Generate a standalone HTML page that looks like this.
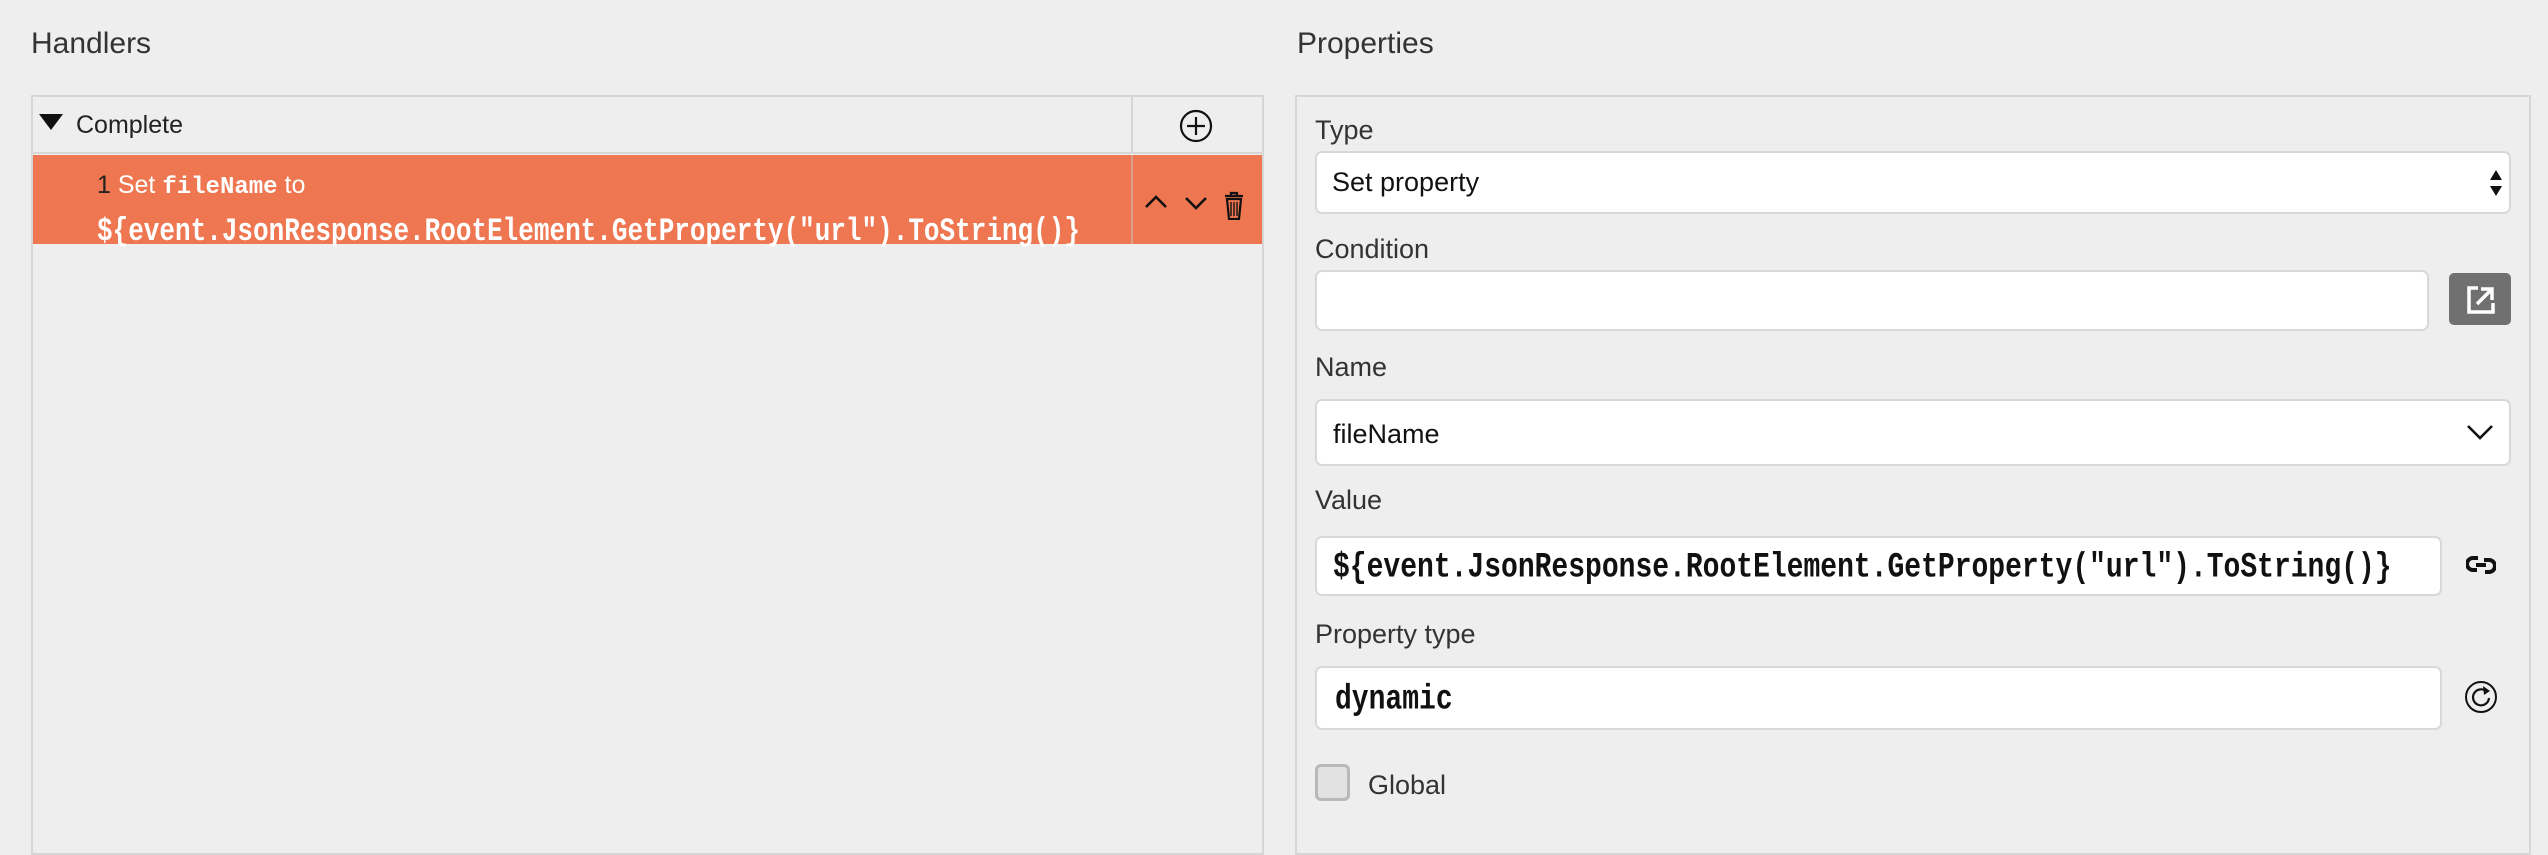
<!DOCTYPE html>
<html><head><meta charset="utf-8"><style>
*{box-sizing:border-box;margin:0;padding:0}
body{width:2548px;height:840px;background:#eeeeee;font-family:"Liberation Sans",sans-serif;color:#222;position:relative;overflow:hidden}
.a{position:absolute}
.h{font-size:30px;color:#333}
.lbl{font-size:27px;color:#333}
.box{background:#fff;border:2px solid #d8d8d8;border-radius:7px}
.mono{font-family:"Liberation Mono",monospace;font-weight:bold}
.tall{transform:scaleY(1.25);transform-origin:0 50%}
</style></head><body>
<div class="a h" style="left:31px;top:27px">Handlers</div>
<div class="a h" style="left:1297px;top:27px">Properties</div>

<div class="a" style="left:31px;top:95px;width:1233px;height:760px;border:2px solid #d6d6d6;background:#eeeeee"></div>
<div class="a" style="left:1131px;top:96px;width:2px;height:58px;background:#d6d6d6"></div>
<div class="a" style="left:33px;top:152px;width:1229px;height:2px;background:#d6d6d6"></div>
<svg class="a" style="left:38px;top:112px" width="26" height="20"><polygon points="1,2 25,2 13,18" fill="#111"/></svg>
<div class="a" style="left:76px;top:111px;font-size:25px;color:#222">Complete</div>
<svg class="a" style="left:1178px;top:108px" width="36" height="36"><circle cx="18" cy="18" r="15" fill="none" stroke="#111" stroke-width="2.2"/><path d="M18 9V27M9 18H27" stroke="#111" stroke-width="2.2"/></svg>

<div class="a" style="left:33px;top:155px;width:1229px;height:89px;background:#ee7650"></div>
<div class="a" style="left:1131px;top:155px;width:2px;height:89px;background:#d9a08a"></div>
<div class="a" style="left:97px;top:171px;font-size:25px;color:#fff;white-space:nowrap"><span style="color:#222">1</span> Set <span class="mono" style="font-size:24px">fileName</span> to</div>
<div class="a mono tall" style="left:97px;top:216px;font-size:26px;color:#fff;white-space:nowrap">${event.JsonResponse.RootElement.GetProperty("url").ToString()}</div>
<svg class="a" style="left:1143px;top:190px" width="120" height="30"><path d="M3 17L13 7L23 17" fill="none" stroke="#111" stroke-width="2.6"/><path d="M43 8L53 18L63 8" fill="none" stroke="#111" stroke-width="2.6"/><path d="M82 6H100M88 6V3H94V6M84 9L86 29H96L98 9Z" fill="none" stroke="#111" stroke-width="2.2"/><path d="M88 12V26M91 12V26M94 12V26" stroke="#111" stroke-width="1.4"/></svg>

<div class="a" style="left:1295px;top:95px;width:1236px;height:760px;border:2px solid #d6d6d6"></div>

<div class="a lbl" style="left:1315px;top:115px">Type</div>
<div class="a box" style="left:1315px;top:151px;width:1196px;height:63px"></div>
<div class="a" style="left:1332px;top:167px;font-size:27px;color:#111">Set property</div>
<svg class="a" style="left:2488px;top:169px" width="16" height="28"><polygon points="8,1 14,11 2,11" fill="#111"/><polygon points="8,27 14,17 2,17" fill="#111"/></svg>

<div class="a lbl" style="left:1315px;top:234px">Condition</div>
<div class="a box" style="left:1315px;top:270px;width:1114px;height:61px"></div>
<div class="a" style="left:2449px;top:273px;width:62px;height:52px;background:#707070;border-radius:5px"></div>
<svg class="a" style="left:2465px;top:284px" width="32" height="32"><path d="M13 4H4V28H28V19" fill="none" stroke="#fff" stroke-width="3.5"/><path d="M12 20L26 6M16 5H27V16" fill="none" stroke="#fff" stroke-width="3.5"/></svg>

<div class="a lbl" style="left:1315px;top:352px">Name</div>
<div class="a box" style="left:1315px;top:399px;width:1196px;height:67px"></div>
<div class="a" style="left:1333px;top:419px;font-size:27px;color:#111">fileName</div>
<svg class="a" style="left:2466px;top:423px" width="28" height="18"><path d="M2 3L14 15L26 3" fill="none" stroke="#111" stroke-width="2.6"/></svg>

<div class="a lbl" style="left:1315px;top:485px">Value</div>
<div class="a box" style="left:1315px;top:536px;width:1127px;height:60px"></div>
<div class="a mono tall" style="left:1333px;top:553px;font-size:28px;color:#111;white-space:nowrap">${event.JsonResponse.RootElement.GetProperty("url").ToString()}</div>
<svg class="a" style="left:2466px;top:553px" width="30" height="24"><path d="M12 5H7A6 6 0 0 0 7 17H11M18 7H23A6 6 0 0 1 23 19H19M10 12H20" fill="none" stroke="#111" stroke-width="4"/></svg>

<div class="a lbl" style="left:1315px;top:619px">Property type</div>
<div class="a box" style="left:1315px;top:666px;width:1127px;height:64px"></div>
<div class="a mono tall" style="left:1335px;top:685px;font-size:28px;color:#111">dynamic</div>
<svg class="a" style="left:2464px;top:680px" width="34" height="34"><circle cx="17" cy="17" r="15" fill="none" stroke="#111" stroke-width="2"/><path d="M23 12A8 8 0 1 0 25 18" fill="none" stroke="#111" stroke-width="2.2"/><polygon points="19,6 26,11 20,15" fill="#111"/></svg>

<div class="a" style="left:1315px;top:764px;width:35px;height:37px;border:3px solid #b8b8b8;border-radius:6px;background:#e2e2e2"></div>
<div class="a lbl" style="left:1368px;top:770px">Global</div>
</body></html>
